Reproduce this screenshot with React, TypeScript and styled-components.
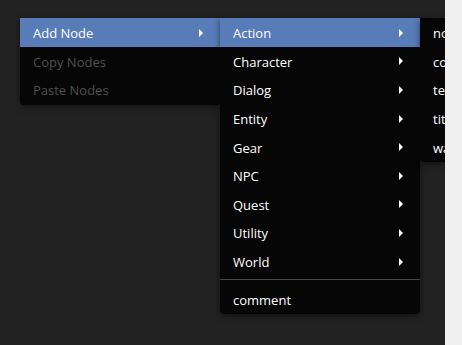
import React from 'react';
import styled, { createGlobalStyle } from 'styled-components';

const GlobalStyle = createGlobalStyle`
  html, body {
    margin: 0;
    padding: 0;
    background: #f0f0f0;
    overflow: hidden;
  }
`;

const Page = styled.div`
  display: flex;
  width: 462px;
  height: 345px;
`;

const Canvas = styled.div`
  position: relative;
  width: 445px;
  height: 345px;
  background: #222222;
  overflow: hidden;
  font-family: 'Open Sans', 'Noto Sans', sans-serif;
  font-size: 13px;
`;

const Gutter = styled.div`
  flex: 1;
  background: #f0f0f0;
`;

const Menu = styled.div<{ $left: number; $top: number; $width: number }>`
  position: absolute;
  left: ${(p) => p.$left}px;
  top: ${(p) => p.$top}px;
  width: ${(p) => p.$width}px;
  display: flex;
  flex-direction: column;
  padding-bottom: 1px;
  background: #060606;
  border-radius: 0 0 4px 4px;
  box-shadow: 0 2px 6px rgba(0, 0, 0, 0.5);
`;

const Item = styled.div<{ $active?: boolean; $disabled?: boolean }>`
  display: flex;
  align-items: center;
  justify-content: space-between;
  box-sizing: border-box;
  height: 28.6px;
  padding: 2px 17px 0 13px;
  background: ${(p) => (p.$active ? '#577cb8' : 'transparent')};
  color: ${(p) => (p.$disabled ? '#505050' : '#ffffff')};
  white-space: nowrap;
`;

const Arrow = styled.span`
  width: 0;
  height: 0;
  margin-top: -1px;
  border-top: 4px solid transparent;
  border-bottom: 4px solid transparent;
  border-left: 4px solid #ffffff;
`;

const Separator = styled.div`
  height: 1px;
  margin: 4px 0 4px;
  background: #484848;
`;

const mainItems = [
  { label: 'Add Node', active: true },
  { label: 'Copy Nodes', disabled: true },
  { label: 'Paste Nodes', disabled: true },
];

const categories = ['Action', 'Character', 'Dialog', 'Entity', 'Gear', 'NPC', 'Quest', 'Utility', 'World'];

const actions = ['notify', 'condition', 'text', 'title', 'wait'];

export default function App() {
  return (
    <Page>
      <GlobalStyle />
      <Canvas>
        <Menu $left={20} $top={18} $width={200}>
          {mainItems.map((m) => (
            <Item key={m.label} $active={m.active} $disabled={m.disabled}>
              {m.label}
              {m.active ? <Arrow /> : null}
            </Item>
          ))}
        </Menu>
        <Menu $left={220} $top={18} $width={200}>
          {categories.map((c, i) => (
            <Item key={c} $active={i === 0}>
              {c}
              <Arrow />
            </Item>
          ))}
          <Separator />
          <Item>comment</Item>
        </Menu>
        <Menu $left={420} $top={18} $width={120}>
          {actions.map((a) => (
            <Item key={a}>{a}</Item>
          ))}
        </Menu>
      </Canvas>
      <Gutter />
    </Page>
  );
}
